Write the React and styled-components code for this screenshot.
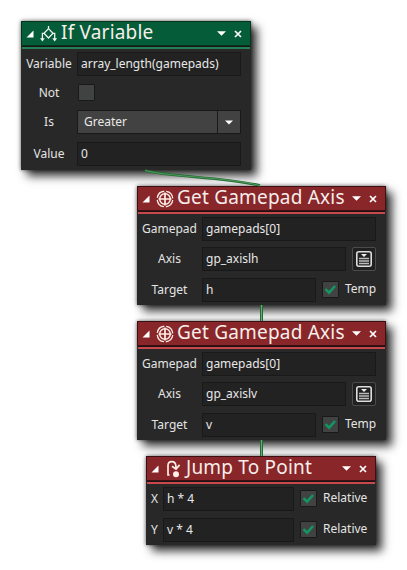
import React from "react";
import styled, {createGlobalStyle} from "styled-components";

const GlobalStyle = createGlobalStyle`
  * {
    box-sizing: border-box;
  }

  body {
    margin: 0;
    background-color: #fff;
    font-family: "Noto Sans", "Open Sans", sans-serif;
  }
`;

const Canvas = styled.div`
  position: relative;
  width: 407px;
  height: 570px;
  overflow: hidden;
`;

const Wires = styled.svg`
  position: absolute;
  top: 0;
  left: 0;
  pointer-events: none;
`;

const Node = styled.section`
  position: absolute;
  left: ${({x}) => x}px;
  top: ${({y}) => y}px;
  width: ${({width}) => width}px;
  height: ${({height}) => height}px;
  background-color: #282828;
  box-shadow: 6px 6px 9px rgba(0, 0, 0, 0.8), 0 0 4px rgba(0, 0, 0, 0.6);
`;

const Header = styled.header`
  display: flex;
  align-items: center;
  height: 25px;
  padding: 0 8px 0 4px;
  border: 1px solid ${({tone}) => (tone === "green" ? "#06351f" : "#3c1012")};
  background-color: ${({tone}) => (tone === "green" ? "#055c38" : "#892629")};
  color: #fff;

  svg {
    flex-shrink: 0;
  }
`;

const Accent = styled.div`
  height: 3px;
  border-top: 1px solid #1c1414;
  margin: 0 1px;
  background-color: ${({tone}) => (tone === "green" ? "#238158" : "#c9484b")};
`;

const HeaderIcon = styled.span`
  display: flex;
  flex-shrink: 0;
  width: 18px;
  margin-left: 6px;
`;

const Title = styled.h2`
  flex: 1;
  min-width: 0;
  margin: 0 0 2px 3px;
  font-size: 19px;
  font-weight: 400;
  line-height: 21px;
  letter-spacing: 0.2px;
  white-space: nowrap;
  color: #f6eeea;
`;

const HeaderButton = styled.button`
  display: flex;
  flex-shrink: 0;
  padding: 0;
  margin-left: 8px;
  border: 0;
  background: none;
`;

const Body = styled.div`
  padding: 3px 0 0 0;
`;

const Row = styled.div`
  display: flex;
  align-items: center;
  height: 24px;
  margin-top: ${({gap}) => gap || 0}px;
`;

const Label = styled.label`
  width: ${({width}) => width}px;
  flex-shrink: 0;
  text-align: center;
  font-size: 12px;
  line-height: 24px;
  white-space: nowrap;
  color: #e4e4e4;
`;

const Field = styled.div`
  width: ${({width}) => width}px;
  height: 24px;
  padding: 0 3px;
  border: 1px solid #191919;
  background-color: #222;
  font-size: 12px;
  line-height: 22px;
  white-space: nowrap;
  color: #e8e8e8;
`;

const Select = styled(Field)`
  display: flex;
  padding: 0 0 0 6px;
  background-color: #424242;
`;

const SelectArrow = styled.span`
  display: flex;
  align-items: center;
  justify-content: center;
  width: 23px;
  margin-left: auto;
  border-left: 1px solid #191919;
`;

const Check = styled.span`
  display: flex;
  align-items: center;
  justify-content: center;
  width: 17px;
  height: 17px;
  margin: 0 0 2px ${({gap}) => gap}px;
  border: 1px solid #191919;
  border-radius: 1px;
  background-color: #414343;
`;

const CheckLabel = styled.span`
  margin-left: 6px;
  font-size: 12px;
  line-height: 22px;
  padding-bottom: 2px;
  color: #e4e4e4;
`;

const ListButton = styled.button`
  display: flex;
  align-items: center;
  justify-content: center;
  width: 24px;
  height: 24px;
  margin-left: 6px;
  padding: 0;
  border: 1px solid #4b4b4b;
  border-radius: 2px;
  background-color: #202020;
`;

const CollapseIcon = () => (
  <svg width='8' height='8' viewBox='0 0 8 8'>
    <path d='M7.5 0.5v7h-7z' fill='#fff' />
  </svg>
);

const ArrowIcon = ({width = 9}) => (
  <svg width={width} height='5' viewBox='0 0 9 5'>
    <path d='M0 0.3h9L4.5 4.8z' fill='#fff' />
  </svg>
);

const CloseIcon = () => (
  <svg width='8' height='8' viewBox='0 0 8 8'>
    <path d='M1 1l6 6M7 1l-6 6' stroke='#fff' strokeWidth='1.7' />
  </svg>
);

const BranchIcon = () => (
  <svg width='18' height='18' viewBox='0 0 18 18' fill='none'>
    <path
      d='M8.5 1v3M8.5 3.6l4.5 4.7-4.5 4.7L4 8.3zM4 8.3H2.4v6M13 8.3h1.7v6'
      stroke='#eef5f0'
      strokeWidth='1.3'
    />
    <path d='M0 13.2h4.8L2.4 16.6zM12.3 13.2h4.8l-2.4 3.4z' fill='#eef5f0' />
  </svg>
);

const TargetIcon = () => (
  <svg width='18' height='18' viewBox='0 0 18 18' fill='none' stroke='#ffede6'>
    <circle
      cx='9'
      cy='9'
      r='7.8'
      strokeWidth='1.3'
      strokeDasharray='10.25 2'
      strokeDashoffset='-1'
    />
    <circle cx='9' cy='9' r='5.3' strokeWidth='1.5' />
    <path d='M9 2.5v13M2.5 9h13' strokeWidth='1.7' />
  </svg>
);

const JumpIcon = () => (
  <svg width='18' height='18' viewBox='0 0 18 18'>
    <path
      d='M4.6 15H3V5.6C3 3 4.5 1.6 6.8 1.6S10.7 3 10.9 6v2.6M7 6.2l4 2.9 3.6-4.2'
      fill='none'
      stroke='#ffede6'
      strokeWidth='1.7'
    />
    <circle cx='11' cy='14.2' r='3' fill='#ffede6' />
  </svg>
);

const CheckIcon = () => (
  <svg width='13' height='11' viewBox='0 0 13 11'>
    <path d='M1.5 5.2l3.6 3.5 6-6.7' fill='none' stroke='#129763' strokeWidth='2.5' />
  </svg>
);

const ListIcon = () => (
  <svg width='18' height='18' viewBox='0 0 18 18' fill='none'>
    <rect x='1.8' y='1.8' width='14.4' height='14.4' rx='2' stroke='#ddd' strokeWidth='1.6' />
    <path d='M6 4h6L9 7z' fill='#eee' />
    <path d='M4 8.5h10M4 11h10M4 13.5h10' stroke='#bbb' strokeWidth='1.4' />
  </svg>
);

const NodeHeader = ({tone, icon, children}) => (
  <>
    <Header tone={tone}>
      <CollapseIcon />
      <HeaderIcon>{icon}</HeaderIcon>
      <Title>{children}</Title>
      <HeaderButton aria-label='Menu'>
        <ArrowIcon />
      </HeaderButton>
      <HeaderButton aria-label='Close'>
        <CloseIcon />
      </HeaderButton>
    </Header>
    <Accent tone={tone} />
  </>
);

const GamepadAxisNode = ({y, axis, target}) => (
  <Node x={137} y={y} width={249} height={119}>
    <NodeHeader tone='red' icon={<TargetIcon />}>
      Get Gamepad Axis
    </NodeHeader>
    <Body>
      <Row>
        <Label width={65}>Gamepad</Label>
        <Field width={174}>gamepads[0]</Field>
      </Row>
      <Row gap={6}>
        <Label width={65}>Axis</Label>
        <Field width={144}>{axis}</Field>
        <ListButton aria-label='Choose axis'>
          <ListIcon />
        </ListButton>
      </Row>
      <Row gap={7}>
        <Label width={65}>Target</Label>
        <Field width={114}>{target}</Field>
        <Check gap={6}>
          <CheckIcon />
        </Check>
        <CheckLabel>Temp</CheckLabel>
      </Row>
    </Body>
  </Node>
);

const points = [
  {name: "X", value: "h * 4"},
  {name: "Y", value: "v * 4"},
];

const App = () => {
  return (
    <>
      <GlobalStyle />
      <Canvas>
        <Node x={21} y={21} width={230} height={149}>
          <NodeHeader tone='green' icon={<BranchIcon />}>
            If Variable
          </NodeHeader>
          <Body>
            <Row>
              <Label width={56}>Variable</Label>
              <Field width={164}>array_length(gamepads)</Field>
            </Row>
            <Row gap={5}>
              <Label width={56}>Not</Label>
              <Check gap={1} />
            </Row>
            <Row gap={5}>
              <Label width={56}>Is</Label>
              <Select width={164}>
                Greater
                <SelectArrow>
                  <ArrowIcon width={8} />
                </SelectArrow>
              </Select>
            </Row>
            <Row gap={8}>
              <Label width={56}>Value</Label>
              <Field width={164}>0</Field>
            </Row>
          </Body>
        </Node>
        <GamepadAxisNode y={186} axis='gp_axislh' target='h' />
        <GamepadAxisNode y={321} axis='gp_axislv' target='v' />
        <Node x={146} y={456} width={230} height={89}>
          <NodeHeader tone='red' icon={<JumpIcon />}>
            Jump To Point
          </NodeHeader>
          <Body>
            {points.map((point, i) => (
              <Row key={point.name} gap={i * 7}>
                <Label width={17}>{point.name}</Label>
                <Field width={131}>{point.value}</Field>
                <Check gap={6}>
                  <CheckIcon />
                </Check>
                <CheckLabel>Relative</CheckLabel>
              </Row>
            ))}
          </Body>
        </Node>
        <Wires width='407' height='570' fill='none'>
          <path d='M145 170.5C170 177 225 177 260 185.5' stroke='#1f6b31' strokeWidth='2.6' />
          <path d='M145 170.5C170 177 225 177 260 185.5' stroke='#5fa566' strokeWidth='0.8' />
          <path d='M261.5 305v16M261.5 440v16' stroke='#1f6b31' strokeWidth='3' />
          <path d='M261.5 305v16M261.5 440v16' stroke='#6fa876' strokeWidth='1' />
        </Wires>
      </Canvas>
    </>
  );
};

export default App;
